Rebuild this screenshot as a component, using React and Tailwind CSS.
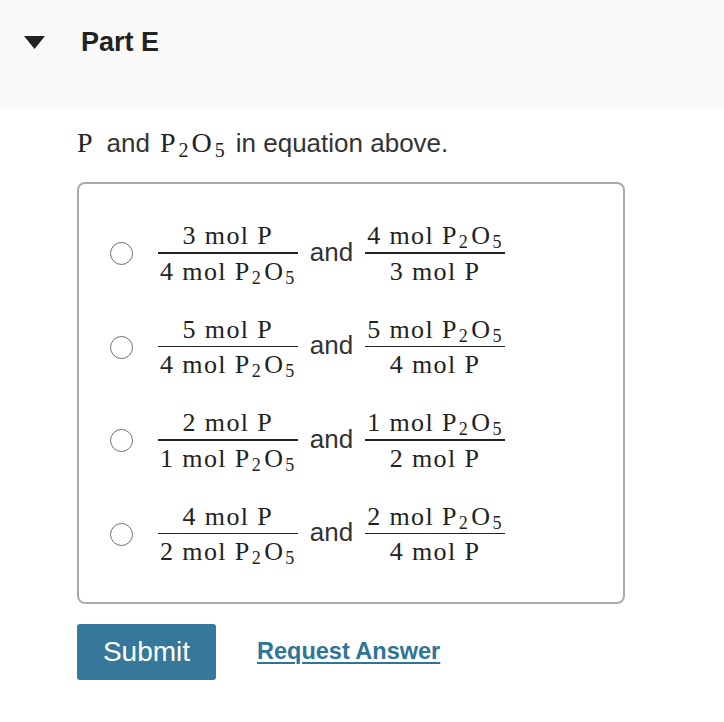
import React from "react";

const serif = { fontFamily: '"Liberation Serif", "Times New Roman", serif' };

function Chem() {
  return (
    <span>
      P<span className="relative top-[4px] text-[18px] leading-[0] ml-[1px] mr-[2px]">2</span>O
      <span className="relative top-[4px] text-[18px] leading-[0] ml-[1px]">5</span>
    </span>
  );
}

function Frac({ num, den }) {
  return (
    <span
      className="inline-flex flex-col items-center text-[26px] text-[#222] tracking-[1.4px]"
      style={serif}
    >
      <span className="h-[30px] leading-[30px] mb-[1px] px-[2px] whitespace-nowrap">{num}</span>
      <span className="h-[1.5px] w-full bg-[#222]" />
      <span className="h-[30px] leading-[30px] mt-[3px] px-[2px] whitespace-nowrap">{den}</span>
    </span>
  );
}

const molP = (n) => <>{n} mol P</>;
const molPO = (n) => (
  <>
    {n} mol <Chem />
  </>
);

const options = [
  [molP(3), molPO(4), molPO(4), molP(3)],
  [molP(5), molPO(4), molPO(5), molP(4)],
  [molP(2), molPO(1), molPO(1), molP(2)],
  [molP(4), molPO(2), molPO(2), molP(4)],
];

export default function App() {
  return (
    <div
      className="w-[724px] h-[722px] bg-white text-[#333]"
      style={{ fontFamily: '"Liberation Sans", Arial, sans-serif' }}
    >
      <div className="h-[108px] bg-[#f9f9f9] flex items-center pb-[24px]">
        <svg width="21" height="13" viewBox="0 0 21 13" className="ml-[24px]">
          <polygon points="0,0 21,0 10.5,13" fill="#222" />
        </svg>
        <span className="ml-[36px] text-[27px] font-bold text-[#222]">Part E</span>
      </div>

      <div className="pl-[77px] pr-[99px]">
        <div className="mt-[17px] h-[36px] leading-[36px] text-[26px] whitespace-nowrap">
          <span className="text-[28px] text-[#222]" style={serif}>P</span>
          <span className="ml-[14px] mr-[10px]">and</span>
          <span className="text-[28px] text-[#222] tracking-[1px]" style={serif}>
            P<span className="relative top-[5px] text-[20px] leading-[0] ml-[2px] mr-[2px]">2</span>O
            <span className="relative top-[5px] text-[20px] leading-[0] ml-[2px]">5</span>
          </span>
          <span className="ml-[10px]">in equation above.</span>
        </div>

        <div className="mt-[21px] h-[422px] border-2 border-[#aaaaaa] rounded-[8px] pt-[37px] pl-[31px] flex flex-col gap-[28px]">
          {options.map((o, i) => (
            <div key={i} className="flex items-center">
              <span className="w-[23px] h-[23px] rounded-full border-[1.5px] border-[#707070] bg-white shrink-0" />
              <span className="ml-[25px]">
                <Frac num={o[0]} den={o[1]} />
              </span>
              <span className="mx-[12px] text-[26px] text-[#333] mb-[3px]">and</span>
              <Frac num={o[2]} den={o[3]} />
            </div>
          ))}
        </div>

        <div className="mt-[20px] flex items-center">
          <button className="w-[139px] h-[56px] rounded-[3px] bg-[#357899] text-white text-[28px] leading-none">
            Submit
          </button>
          <a className="ml-[41px] text-[23.5px] font-bold text-[#2e7597] underline underline-offset-[3px] decoration-[2px]">
            Request Answer
          </a>
        </div>
      </div>
    </div>
  );
}
